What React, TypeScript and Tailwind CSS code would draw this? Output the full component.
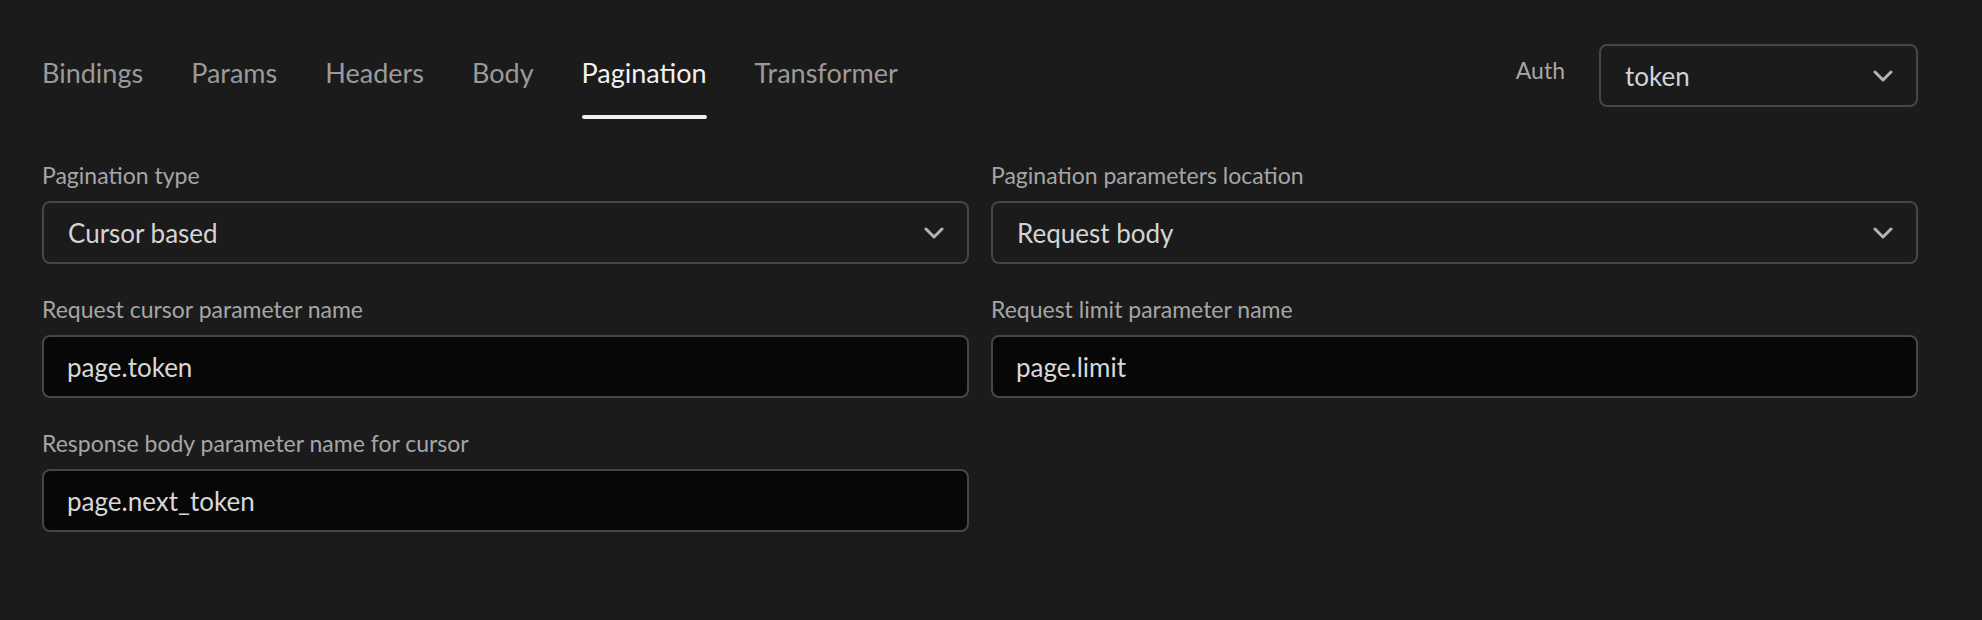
import React from 'react';

const tabs = ['Bindings', 'Params', 'Headers', 'Body', 'Pagination', 'Transformer'];
const activeTab = 'Pagination';

const Chevron: React.FC = () => (
  <svg width="20" height="12" viewBox="0 0 20 12" fill="none" className="shrink-0">
    <path d="M2 2 L10 10 L18 2" stroke="#b4b4b4" strokeWidth="3" strokeLinecap="round" strokeLinejoin="round" />
  </svg>
);

const SelectBox: React.FC<{ value: string; className?: string }> = ({ value, className }) => (
  <div
    className={`flex h-[63px] items-center justify-between rounded-[8px] border-2 border-[#464646] bg-[#1b1b1b] pl-[24px] pr-[23px] ${className ?? ''}`}
  >
    <span className="text-[26px] leading-[32px] text-[#d4d4d4]">{value}</span>
    <Chevron />
  </div>
);

const TextInput: React.FC<{ value: string }> = ({ value }) => (
  <div className="flex h-[63px] items-center rounded-[8px] border-2 border-[#464646] bg-[#070707] pl-[23px]">
    <span className="text-[26px] leading-[32px] text-[#d8d8d8]">{value}</span>
  </div>
);

const Field: React.FC<{ label: string; children: React.ReactNode }> = ({ label, children }) => (
  <div className="flex flex-col">
    <label className="text-[23px] leading-[28px] text-[#a6a6a6]">{label}</label>
    <div className="mt-[12px]">{children}</div>
  </div>
);

const App: React.FC = () => {
  return (
    <div
      className="h-[620px] w-full overflow-hidden bg-[#1b1b1b] pl-[42px] pr-[64px] pt-[44px]"
      style={{ fontFamily: 'Lato, "Noto Sans", sans-serif' }}
    >
      {/* Tabs + auth */}
      <div className="flex items-start justify-between">
        <div className="flex gap-[48px]">
          {tabs.map((tab) => {
            const active = tab === activeTab;
            return (
              <div key={tab} className="flex flex-col pt-[9px]">
                <span
                  className={`text-[27px] leading-[40px] ${active ? 'text-[#f2f2f2]' : 'text-[#9a9a9a]'}`}
                >
                  {tab}
                </span>
                <div className={`mt-[22px] h-[4px] rounded-full ${active ? 'bg-[#f2f2f2]' : 'bg-transparent'}`} />
              </div>
            );
          })}
        </div>

        <div className="flex items-start gap-[34px]">
          <span className="mt-[11px] text-[23px] leading-[30px] text-[#a6a6a6]">Auth</span>
          <SelectBox value="token" className="w-[319px]" />
        </div>
      </div>

      {/* Pagination settings */}
      <div className="mt-[42px] grid grid-cols-2 gap-x-[22px] gap-y-[31px]">
        <Field label="Pagination type">
          <SelectBox value="Cursor based" />
        </Field>
        <Field label="Pagination parameters location">
          <SelectBox value="Request body" />
        </Field>
        <Field label="Request cursor parameter name">
          <TextInput value="page.token" />
        </Field>
        <Field label="Request limit parameter name">
          <TextInput value="page.limit" />
        </Field>
        <Field label="Response body parameter name for cursor">
          <TextInput value="page.next_token" />
        </Field>
      </div>
    </div>
  );
};

export default App;
